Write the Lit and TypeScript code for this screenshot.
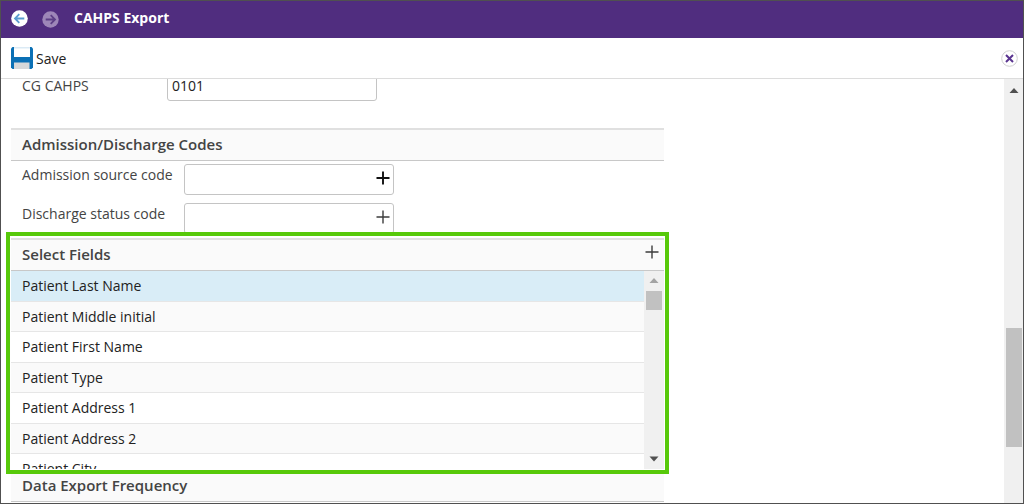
import { LitElement, html, css } from "lit";
import { customElement, property, state } from "lit/decorators.js";
import { classMap } from "lit/directives/class-map.js";

const plusIcon = (bold = false) => html`
  <svg width="14" height="14" viewBox="0 0 14 14" aria-hidden="true">
    <path d="M7 .5V13.5M.5 7H13.5" fill="none" stroke=${bold ? "#111" : "#3c3c3c"} stroke-width=${bold ? 1.9 : 1.4} />
  </svg>
`;

/** Vertical scroll bar; the numbers are the shares of the track before, in and after the thumb. */
@customElement("scroll-rail")
class ScrollRail extends LitElement {
  @property({ type: Number }) before = 0;
  @property({ type: Number }) thumb = 1;
  @property({ type: Number }) after = 1;
  @property({ type: Boolean }) open = false;
  @property({ type: Boolean, attribute: "at-top" }) atTop = false;

  static styles = css`
    :host {
      display: flex;
      flex-direction: column;
      flex: none;
      width: 20px;
      box-sizing: border-box;
      padding: 0 2px;
      background: #f0f0f0;
    }
    :host([open]) {
      width: 19px;
      padding: 2px 1px 0 2px;
    }
    .arrow {
      flex: none;
      height: 20px;
      display: flex;
      align-items: center;
      justify-content: center;
      fill: #505050;
    }
    .arrow.dim {
      fill: #a3a3a3;
    }
    .thumb {
      background: #c1c1c1;
    }
  `;

  render() {
    return html`
      <div class=${classMap({ arrow: true, dim: this.atTop })}>
        <svg width="10" height="6" viewBox="0 0 10 6"><path d="M5 0L9.5 5H.5Z" /></svg>
      </div>
      <div style="flex: ${this.before} 0 0px"></div>
      <div class="thumb" style="flex: ${this.thumb} 0 0px"></div>
      <div style="flex: ${this.after} 0 0px"></div>
      ${this.open
        ? null
        : html`<div class="arrow">
            <svg width="10" height="6" viewBox="0 0 10 6"><path d="M5 5.5L.5 .5H9.5Z" /></svg>
          </div>`}
    `;
  }
}

@customElement("app-root")
class AppRoot extends LitElement {
  @state() private selected = 0;

  private fields = [
    "Patient Last Name",
    "Patient Middle initial",
    "Patient First Name",
    "Patient Type",
    "Patient Address 1",
    "Patient Address 2",
    "Patient City",
  ];

  static styles = css`
    :host {
      display: flex;
      flex-direction: column;
      height: 100vh;
      box-sizing: border-box;
      border: 1px solid #505050;
      overflow: hidden;
      background: #fff;
      color: #222;
      font: 14px/20px "Open Sans", "Noto Sans", sans-serif;
    }
    button {
      display: flex;
      align-items: center;
      padding: 0;
      border: 0;
      background: none;
      color: inherit;
      font: inherit;
      cursor: pointer;
    }
    svg {
      display: block;
    }
    .bar {
      display: flex;
      align-items: center;
      flex: none;
      height: 37px;
      box-sizing: border-box;
      padding: 0 10px 3px;
      background: #502d7f;
      color: #fff;
    }
    .bar h1 {
      margin: 0 0 0 15px;
      font-size: 14px;
      line-height: 20px;
      font-weight: 700;
    }
    .bar button + button {
      margin-left: 14px;
    }
    .tools {
      display: flex;
      align-items: center;
      justify-content: space-between;
      flex: none;
      height: 40px;
      padding: 0 5px 0 10px;
      border-bottom: 1px solid #dcdcdc;
    }
    .save {
      gap: 3px;
    }
    .save span {
      padding-top: 2px;
    }
    .view {
      display: flex;
      flex: 1;
      min-height: 0;
      overflow: hidden;
    }
    .form {
      flex: 1;
      min-width: 0;
      padding-left: 10px;
    }
    .form > * {
      max-width: 653px;
    }
    .row {
      display: grid;
      grid-template-columns: 162px 210px;
      align-items: start;
      padding-left: 11px;
      color: #444;
    }
    .row label {
      padding-top: 1px;
      font-weight: 500;
    }
    .row.scrolled {
      grid-template-columns: 145px 210px;
      margin-top: -9px;
      margin-bottom: 27px;
    }
    .row.scrolled label {
      padding-top: 6px;
    }
    .box {
      display: flex;
      align-items: center;
      height: 31px;
      box-sizing: border-box;
      border: 1px solid #c4c4c4;
      border-radius: 3px;
      background: #fff;
    }
    .box input {
      flex: 1;
      min-width: 0;
      box-sizing: border-box;
      height: 100%;
      padding: 0 4px;
      border: 0;
      outline: 0;
      background: none;
      color: #222;
      font: inherit;
    }
    .box button {
      padding: 0 3px 3px 0;
    }
    .codes {
      display: grid;
      gap: 8px;
      padding: 3px 0 4px;
    }
    .heading {
      display: flex;
      align-items: center;
      justify-content: space-between;
      height: 33px;
      box-sizing: border-box;
      padding: 0 5px 3px 11px;
      border-top: 2px solid #e0e0e0;
      border-bottom: 1px solid #c8c8c8;
      background: #fafafa;
    }
    .heading h2 {
      margin: 0;
      color: #444;
      font-size: 15px;
      line-height: 20px;
      font-weight: 600;
    }
    .heading button {
      padding-bottom: 3px;
    }
    .select {
      position: relative;
    }
    .outline {
      position: absolute;
      inset: -6px -5px -5px -5px;
      border: 4px solid #57c90a;
      box-shadow: inset 0 0 0 1px #fff;
      pointer-events: none;
    }
    .pane {
      display: flex;
      height: 198px;
      overflow: hidden;
    }
    .pane ul {
      flex: 1;
      display: grid;
      grid-auto-rows: 31px 30px;
      margin: 0;
      padding: 0;
      list-style: none;
    }
    .pane li {
      display: flex;
      align-items: center;
      padding-left: 11px;
      border-bottom: 1px solid #e6e6e6;
      cursor: default;
    }
    .pane li:nth-child(even) {
      background: #fafafa;
    }
    .pane li.on {
      background: #d9edf7;
    }
  `;

  render() {
    return html`
      <header class="bar">
        <button aria-label="Back">
          <svg width="17" height="17" viewBox="0 0 17 17">
            <circle cx="8.5" cy="8.5" r="8.3" fill="#fff" />
            <path d="M13.3 8.5H4.5M8.3 4.2L4 8.5L8.3 12.8" fill="none" stroke="#5b9bd0" stroke-width="1.8" />
          </svg>
        </button>
        <button aria-label="Forward">
          <svg width="17" height="19" viewBox="0 -2 17 19">
            <circle cx="8.5" cy="8.5" r="8.2" fill="#9d86b8" />
            <path d="M3.7 8.5H12.5M8.7 4.2L13 8.5L8.7 12.8" fill="none" stroke="#5d3f86" stroke-width="1.8" />
          </svg>
        </button>
        <h1>CAHPS Export</h1>
      </header>

      <div class="tools">
        <button class="save">
          <svg width="22" height="22" viewBox="0 0 22 22" aria-hidden="true">
            <path d="M1.5 0H20.5L22 1.5V20.5L20.5 22H1.5L0 20.5V1.5Z" fill="#0b70b5" />
            <path d="M3 0H19V10H3Z" fill="#fff" />
            <path d="M3 0H19V1.5H3Z" fill="#dbeaf5" />
            <path d="M3 15.5H18.5V22H3Z" fill="#d6d8da" />
          </svg>
          <span>Save</span>
        </button>
        <button aria-label="Close">
          <svg width="17" height="17" viewBox="0 0 17 17">
            <circle cx="8.5" cy="8.5" r="7.8" fill="#fff" stroke="#cfcfcf" />
            <path d="M5 5L12 12M12 5L5 12" stroke="#5a3590" stroke-width="2" />
          </svg>
        </button>
      </div>

      <div class="view">
        <main class="form">
          <div class="row scrolled">
            <label for="cg">CG CAHPS</label>
            <div class="box"><input id="cg" type="text" value="0101" /></div>
          </div>

          <section>
            <div class="heading"><h2>Admission/Discharge Codes</h2></div>
            <div class="codes">
              <div class="row">
                <label for="source">Admission source code</label>
                <div class="box">
                  <input id="source" type="text" />
                  <button aria-label="Add admission source code">${plusIcon(true)}</button>
                </div>
              </div>
              <div class="row">
                <label for="status">Discharge status code</label>
                <div class="box">
                  <input id="status" type="text" />
                  <button aria-label="Add discharge status code">${plusIcon()}</button>
                </div>
              </div>
            </div>
          </section>

          <section class="select">
            <div class="heading">
              <h2>Select Fields</h2>
              <button aria-label="Add field">${plusIcon()}</button>
            </div>
            <div class="pane">
              <ul role="listbox" aria-label="Select Fields">
                ${this.fields.map(
                  (name, i) => html`<li
                    role="option"
                    aria-selected=${i === this.selected}
                    class=${classMap({ on: i === this.selected })}
                    @click=${() => (this.selected = i)}
                  >${name}</li>`
                )}
              </ul>
              <scroll-rail before="0" thumb="19" after="139" at-top></scroll-rail>
            </div>
            <div class="outline"></div>
          </section>

          <section>
            <div class="heading"><h2>Data Export Frequency</h2></div>
          </section>
        </main>
        <scroll-rail before="227" thumb="119" after="56" open></scroll-rail>
      </div>
    `;
  }
}
